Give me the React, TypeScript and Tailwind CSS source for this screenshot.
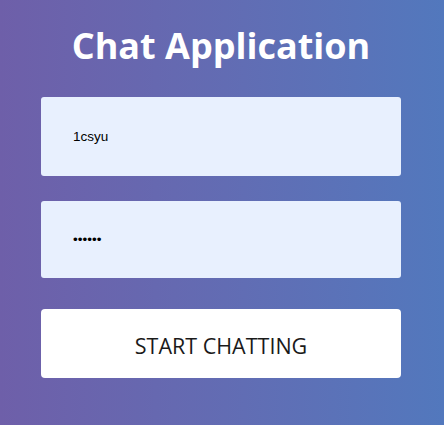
export default function App() {
  return (
    <main className="h-[425px] w-full bg-gradient-to-r from-[#6e5fa9] to-[#5278bd] pl-[41px] pr-[43px] pt-[22px]">
      <h1 className="text-center font-['Open_Sans','Noto_Sans',sans-serif] text-[36px] font-bold leading-[48px] text-white">
        Chat Application
      </h1>
      <form className="mt-[27px] flex flex-col" onSubmit={(e) => e.preventDefault()}>
        <input
          className="h-[79px] w-full rounded-[3px] bg-[#e8f0fe] px-[32px] font-['Liberation_Sans',Arial,sans-serif] text-[13.5px] text-black outline-none"
          defaultValue="1csyu"
        />
        <input
          type="password"
          className="mt-[25px] h-[77px] w-full rounded-[3px] bg-[#e8f0fe] px-[32px] font-['Liberation_Sans',Arial,sans-serif] text-[13.5px] text-black outline-none"
          defaultValue="123456"
        />
        <button
          type="submit"
          className="mt-[31px] h-[69px] w-full rounded-[4px] bg-white pt-[5px] font-['Open_Sans','Noto_Sans',sans-serif] text-[21.5px] text-[#1a1a1a]"
        >
          START CHATTING
        </button>
      </form>
    </main>
  );
}
